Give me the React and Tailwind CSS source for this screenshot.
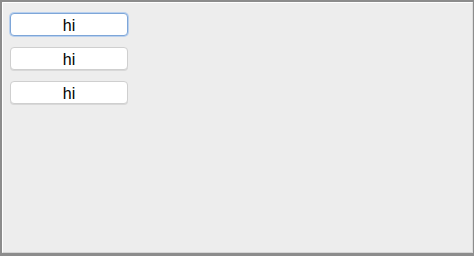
export default function App() {
  const buttons = ["hi", "hi", "hi"]

  return (
    <div className="w-[474px] h-[256px] bg-[#8c8c8c] pt-[2px] pl-[2px] pr-[1px] pb-[3px] font-['Liberation_Sans',Arial,sans-serif]">
      <div className="h-full bg-[#ededed] border-l border-t border-white border-r border-b border-r-[#dcdcdc] border-b-[#d4d4d4] pl-[7px] pt-[10px] flex flex-col gap-[11px]">
        {buttons.map((label, i) => (
          <button
            key={i}
            className={`w-[118px] h-[23px] rounded-[4px] bg-white text-[16px] leading-none text-black flex items-center justify-center pt-[2px] ${
              i === 0
                ? "border border-[#7ea6d8] shadow-[0_0_0_1px_#b9d0ee]"
                : "border border-[#cfcfcf] shadow-[0_1px_0_#d8d8d8]"
            }`}
          >
            {label}
          </button>
        ))}
      </div>
    </div>
  )
}
